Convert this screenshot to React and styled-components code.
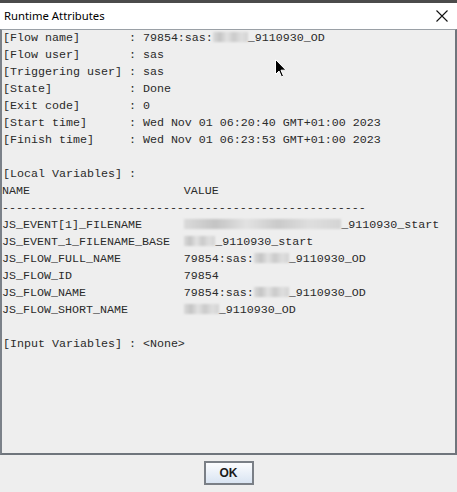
import React from 'react';
import styled, { createGlobalStyle } from 'styled-components';

const Global = createGlobalStyle`
  html, body {
    margin: 0;
    padding: 0;
    background: #eeeeee;
  }
`

const Window = styled.div`
  position: relative;
  display: flex;
  flex-direction: column;
  width: 457px;
  height: 492px;
  background: #eeeeee;
  overflow: hidden;
`

const TitleBar = styled.div`
  display: flex;
  align-items: center;
  justify-content: space-between;
  height: 25px;
  border-top: 3px solid #4b4b4b;
  background: #ffffff;
  padding: 0 8px 1px 4px;
`

const Title = styled.span`
  font-family: "Noto Sans", "Open Sans", sans-serif;
  font-size: 11.3px;
  color: #000;
`

const CloseIcon = styled.svg`
  width: 12px;
  height: 12px;
  margin-right: 1px;
`

const TextArea = styled.div`
  flex: 1;
  border-top: 1px solid #9aa0a6;
  border-left: 2px solid #7b8189;
  border-right: 2px solid #6f757c;
  border-bottom: 2px solid #6f757c;
  background: #eeeeee;
`

const Pre = styled.pre`
  margin: 0;
  font-family: "Liberation Mono", "Courier New", monospace;
  font-size: 11.67px;
  line-height: 17px;
  color: #2a2a2a;
  white-space: pre;
`

const Line = styled.div`
  height: 17px;
  padding-left: ${p => (p.$flush ? 0 : 1)}px;
`

const Redacted = styled.span`
  display: inline-block;
  width: ${p => p.$w}ch;
  height: 10px;
  vertical-align: -1px;
  background: linear-gradient(90deg, #dadada 0%, #c4c4c4 20%, #e2e2e2 40%, #cacaca 60%, #dedede 80%, #d4d4d4 100%);
  filter: blur(0.8px);
`

const Footer = styled.div`
  display: flex;
  justify-content: center;
  align-items: flex-start;
  height: 37px;
  padding-top: 6px;
  box-sizing: border-box;
`

const OkButton = styled.button`
  width: 50px;
  height: 24px;
  border: 2px solid #7a7f86;
  background: linear-gradient(#fbfcfe, #d9e4f2);
  font-family: "Liberation Sans", Arial, sans-serif;
  font-weight: bold;
  font-size: 12px;
  color: #1a1a1a;
  padding: 0;
`

const Cursor = styled.svg`
  position: absolute;
  left: 275px;
  top: 59px;
  width: 12px;
  height: 19px;
`

const R = ({ w }) => <Redacted $w={w} />;

const App = () => (
  <Window>
    <Global />
    <TitleBar>
      <Title>Runtime Attributes</Title>
      <CloseIcon viewBox="0 0 12 12">
        <path d="M0.5 0.5 L11.5 11.5 M11.5 0.5 L0.5 11.5" stroke="#111" strokeWidth="1.1" />
      </CloseIcon>
    </TitleBar>
    <TextArea>
      <Pre>
        <Line>[Flow name]       : 79854:sas:<R w={5} />_9110930_OD</Line>
        <Line>[Flow user]       : sas</Line>
        <Line>[Triggering user] : sas</Line>
        <Line>[State]           : Done</Line>
        <Line>[Exit code]       : 0</Line>
        <Line>[Start time]      : Wed Nov 01 06:20:40 GMT+01:00 2023</Line>
        <Line>[Finish time]     : Wed Nov 01 06:23:53 GMT+01:00 2023</Line>
        <Line> </Line>
        <Line>[Local Variables] :</Line>
        <Line $flush>NAME                      VALUE</Line>
        <Line $flush>{'-'.repeat(52)}</Line>
        <Line $flush>JS_EVENT[1]_FILENAME      <R w={22.5} />_9110930_start</Line>
        <Line $flush>JS_EVENT_1_FILENAME_BASE  <R w={4.5} />_9110930_start</Line>
        <Line $flush>JS_FLOW_FULL_NAME         79854:sas:<R w={5} />_9110930_OD</Line>
        <Line $flush>JS_FLOW_ID                79854</Line>
        <Line $flush>JS_FLOW_NAME              79854:sas:<R w={5} />_9110930_OD</Line>
        <Line $flush>JS_FLOW_SHORT_NAME        <R w={5} />_9110930_OD</Line>
        <Line> </Line>
        <Line>[Input Variables] : &lt;None&gt;</Line>
      </Pre>
    </TextArea>
    <Footer>
      <OkButton>OK</OkButton>
    </Footer>
    <Cursor viewBox="0 0 12 19">
      <path d="M0.5 0.5 L0.5 15.5 L4 12 L6.5 18 L8.5 17 L6 11.2 L11 11.2 Z" fill="#000" stroke="#fff" strokeWidth="1" />
    </Cursor>
  </Window>
);

export default App;
